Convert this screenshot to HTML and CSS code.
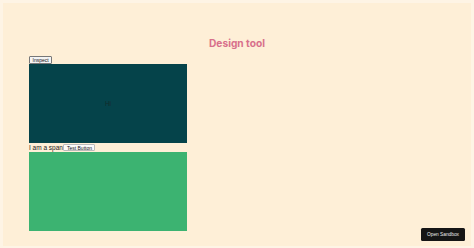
FILE: index.html
```html
<!DOCTYPE html>
<html lang="en">
<head>
    <meta charset="UTF-8">
    <title>Design tool</title>
    <link rel="stylesheet" href="styles.css">
</head>
<body>
<div class="app">
    <h1 class="title">Design tool</h1>
    <div class="stage">
        <button class="btn inspect">Inspect</button>
        <div class="box dark"><span class="hi">Hi</span></div>
        <div class="row">
            <span class="span-text">I am a span</span>
            <button class="btn">Test Button</button>
        </div>
        <div class="box green"></div>
    </div>
    <button class="sandbox">Open Sandbox</button>
</div>
</body>
</html>
```

FILE: styles.css
```css
html{
    background: #fef4e5;
}
body{
    margin: 0;
    padding: 3px;
    height: 248px;
    box-sizing: border-box;
}
.app{
    position: relative;
    height: 243px;
    background: #feefd7;
    font-family: "Liberation Sans", Arial, sans-serif;
}
.title{
    margin: 0;
    padding-top: 33px;
    text-align: center;
    font: 700 10.2px/14px Inter, "Liberation Sans", sans-serif;
    color: #d8708b;
}
.stage{
    margin: 6px 0 0 26px;
    width: 158px;
}
.btn{
    display: block;
    padding: 0 2.5px;
    height: 7.5px;
    font: 5px/6px "Liberation Sans", Arial, sans-serif;
    color: #111;
    background: #f4f4f4;
    border: 0.5px solid #777;
    border-radius: 1px;
}
.inspect{
    margin-bottom: 0.5px;
}
.box{
    width: 158px;
    height: 79px;
}
.dark{
    background: #05434a;
    display: flex;
    align-items: center;
    justify-content: center;
}
.hi{
    font-size: 6.5px;
    color: #142a2a;
}
.green{
    background: #3cb371;
}
.row{
    display: flex;
    align-items: center;
    height: 8.5px;
}
.span-text{
    font-size: 6.5px;
    color: #222;
}
.row .btn{
    margin-left: 0.5px;
    background: #fbfbfb;
    border-color: #bbb;
}
.sandbox{
    position: absolute;
    right: 6px;
    bottom: 5.5px;
    width: 44px;
    height: 13px;
    padding: 0;
    background: #151515;
    color: #eee;
    border: none;
    border-radius: 1.5px;
    font: 4.8px "Liberation Sans", Arial, sans-serif;
}
```
